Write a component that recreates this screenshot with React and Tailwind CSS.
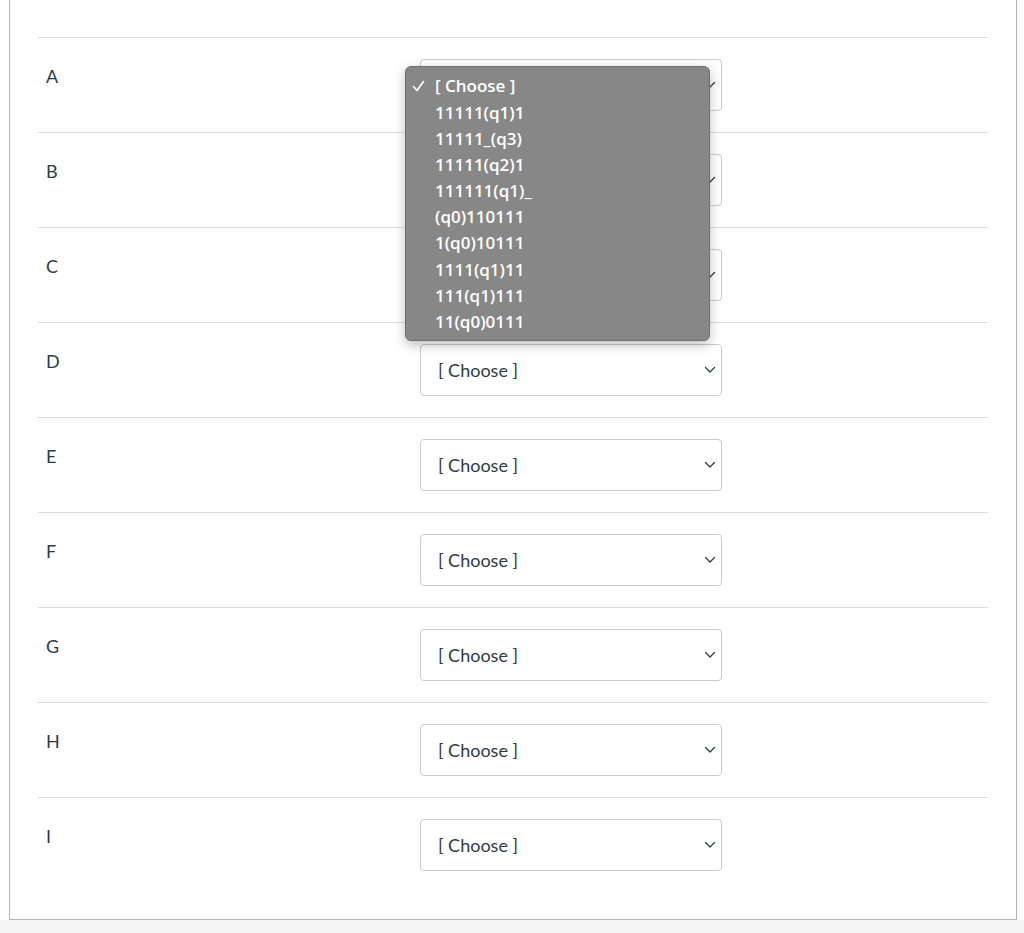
import React from "react";

const labels = ["A", "B", "C", "D", "E", "F", "G", "H", "I"];
const options = [
  "[ Choose ]",
  "11111(q1)1",
  "11111_(q3)",
  "11111(q2)1",
  "111111(q1)_",
  "(q0)110111",
  "1(q0)10111",
  "1111(q1)11",
  "111(q1)111",
  "11(q0)0111",
];

function Chevron() {
  return (
    <svg width="12" height="8" viewBox="0 0 12 8" className="text-[#2d3b45]">
      <path d="M1.5 1.5 L6 6 L10.5 1.5" fill="none" stroke="currentColor" strokeWidth="1.3" strokeLinecap="round" strokeLinejoin="round" />
    </svg>
  );
}

function Check() {
  return (
    <svg width="13" height="12" viewBox="0 0 13 12">
      <path d="M1.5 6.5 L5 10.5 L11.5 1.5" fill="none" stroke="white" strokeWidth="1.6" strokeLinecap="round" strokeLinejoin="round" />
    </svg>
  );
}

function Row({ label }) {
  return (
    <div className="flex h-[95px] border-t border-[#dcdcdc]">
      <div className="w-[382px] pl-[8px] pt-[26px] text-[18px] leading-[24px] text-[#2d3b45]">{label}</div>
      <div className="pt-[21px]">
        <div className="flex h-[52px] w-[302px] items-center justify-between rounded-[4px] border border-[#c7cdd1] bg-white pl-[17px] pr-[5px] text-[18px] text-[#2d3b45]">
          <span>[ Choose ]</span>
          <Chevron />
        </div>
      </div>
    </div>
  );
}

export default function App() {
  return (
    <div className="w-[1024px] bg-white" style={{ fontFamily: "Lato, 'Noto Sans', sans-serif" }}>
      <div className="relative mx-[9px] w-[1008px] border-x border-b border-[#b4b4b4] px-[28px] pt-[37px] pb-[27px]">
        {labels.map((l) => (
          <Row key={l} label={l} />
        ))}
        <div
          className="absolute left-[395px] top-[66px] w-[305px] rounded-[6px] border border-[#6e6e6e] bg-[#878787] pt-[6px] pb-[5px] shadow-[0_4px_12px_rgba(0,0,0,0.25)]"
          style={{ fontFamily: "'Open Sans', 'Noto Sans', sans-serif" }}
        >
          {options.map((o, i) => (
            <div key={o} className="flex h-[26.2px] items-center text-[17px] font-semibold text-white">
              <span className="flex w-[29px] pl-[6px]">{i === 0 ? <Check /> : null}</span>
              <span>{o}</span>
            </div>
          ))}
        </div>
      </div>
      <div className="h-[13px] bg-[#f5f5f5]" />
    </div>
  );
}
